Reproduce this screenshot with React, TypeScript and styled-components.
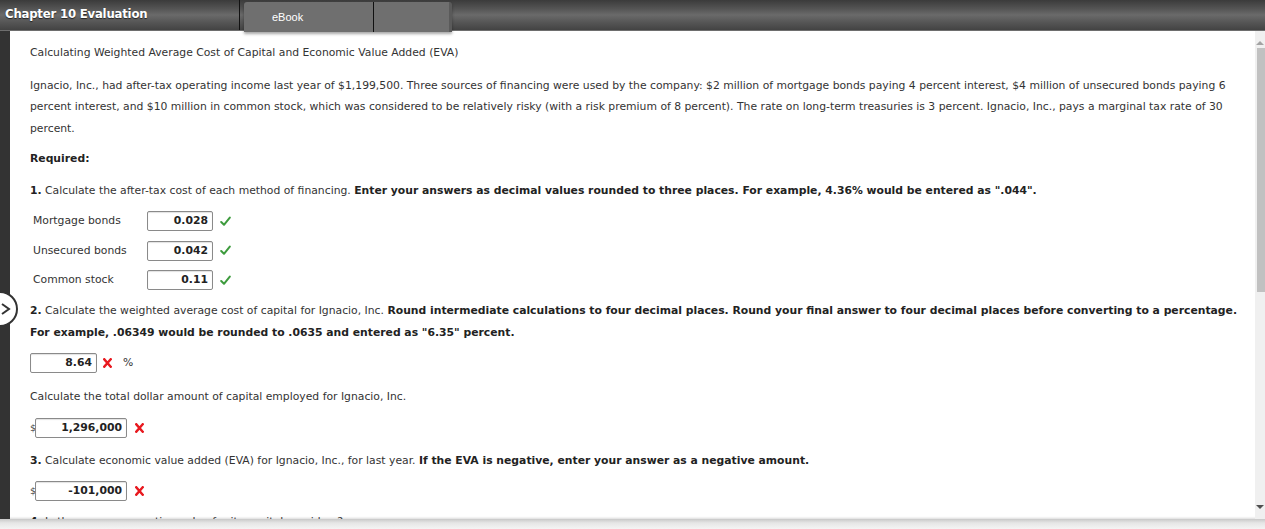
import React from 'react';
import styled, { createGlobalStyle } from 'styled-components';

const GlobalStyle = createGlobalStyle`
    html, body {
        margin: 0;
        padding: 0;
        overflow: hidden;
        background: #ffffff;
    }
    * {
        box-sizing: border-box;
    }
`;

interface CostRow {
    label: string;
    value: string;
}

const costRows: CostRow[] = [
    { label: 'Mortgage bonds', value: '0.028' },
    { label: 'Unsecured bonds', value: '0.042' },
    { label: 'Common stock', value: '0.11' },
];

const CheckIcon = () => (
    <svg width="11" height="11" viewBox="0 0 11 11">
        <path d="M1.2 6 L4 8.8 L9.8 1.6" fill="none" stroke="#3d9b3d" strokeWidth="2" strokeLinecap="round" strokeLinejoin="round" />
    </svg>
);

const CrossIcon = () => (
    <svg width="9" height="10" viewBox="0 0 9 10">
        <path d="M1.3 1.3 L7.7 8.7 M7.7 1.3 L1.3 8.7" fill="none" stroke="#e8191f" strokeWidth="2.4" strokeLinecap="square" />
    </svg>
);

const App: React.FC = () => {
    return (
        <Page>
            <GlobalStyle />
            <Header>
                <Title>Chapter 10 Evaluation</Title>
                <TabStrip>
                    <Tab>
                        <TabLabel>eBook</TabLabel>
                        <TabSlot />
                    </Tab>
                </TabStrip>
            </Header>
            <Main>
                <LeftRail />
                <ExpandButton>
                    <svg width="12" height="14" viewBox="0 0 12 14">
                        <path d="M2 2 L9 7 L2 12" fill="none" stroke="#333" strokeWidth="2" />
                    </svg>
                </ExpandButton>
                <Content>
                    <Intro>Calculating Weighted Average Cost of Capital and Economic Value Added (EVA)</Intro>
                    <Paragraph>
                        Ignacio, Inc., had after-tax operating income last year of $1,199,500. Three sources of financing were used by the company: $2 million of mortgage bonds paying 4 percent interest, $4 million of unsecured bonds paying 6 percent interest, and $10 million in common stock, which was considered to be relatively risky (with a risk premium of 8 percent). The rate on long-term treasuries is 3 percent. Ignacio, Inc., pays a marginal tax rate of 30 percent.
                    </Paragraph>
                    <Required>Required:</Required>
                    <Question>
                        <b>1.</b> Calculate the after-tax cost of each method of financing. <b>Enter your answers as decimal values rounded to three places. For example, 4.36% would be entered as ".044".</b>
                    </Question>
                    <RowList>
                        {costRows.map((row) => (
                            <AnswerRow key={row.label}>
                                <RowLabel>{row.label}</RowLabel>
                                <AnswerBox width={66}>{row.value}</AnswerBox>
                                <Mark size={18}><CheckIcon /></Mark>
                            </AnswerRow>
                        ))}
                    </RowList>
                    <Question>
                        <b>2.</b> Calculate the weighted average cost of capital for Ignacio, Inc. <b>Round intermediate calculations to four decimal places. Round your final answer to four decimal places before converting to a percentage.</b>
                        <br />
                        <b>For example, .06349 would be rounded to .0635 and entered as "6.35" percent.</b>
                    </Question>
                    <InlineAnswer>
                        <AnswerBox width={67}>8.64</AnswerBox>
                        <Mark size={15}><CrossIcon /></Mark>
                        <Unit>%</Unit>
                    </InlineAnswer>
                    <Question gap={13}>Calculate the total dollar amount of capital employed for Ignacio, Inc.</Question>
                    <InlineAnswer>
                        <Currency>$</Currency>
                        <AnswerBox width={92}>1,296,000</AnswerBox>
                        <Mark size={17}><CrossIcon /></Mark>
                    </InlineAnswer>
                    <Question gap={12}>
                        <b>3.</b> Calculate economic value added (EVA) for Ignacio, Inc., for last year. <b>If the EVA is negative, enter your answer as a negative amount.</b>
                    </Question>
                    <InlineAnswer>
                        <Currency>$</Currency>
                        <AnswerBox width={92}>-101,000</AnswerBox>
                        <Mark size={17}><CrossIcon /></Mark>
                    </InlineAnswer>
                    <Question gap={10}>
                        <b>4.</b> Is the company creating value for its capital providers?
                    </Question>
                </Content>
                <ScrollTrack>
                    <ScrollArrow up />
                    <ScrollThumb />
                    <ScrollSpacer />
                    <ScrollArrow />
                </ScrollTrack>
            </Main>
            <Footer />
        </Page>
    );
};

const Page = styled.div`
    width: 1265px;
    height: 529px;
    display: flex;
    flex-direction: column;
    font-family: 'DejaVu Sans', Verdana, sans-serif;
    color: #333;
    overflow: hidden;
`;

const Header = styled.div`
    height: 31px;
    flex-shrink: 0;
    display: flex;
    align-items: stretch;
    background: linear-gradient(to bottom, #3b3b3b 0%, #555 30%, #6a6a6a 50%, #555 75%, #434343 100%);
    border-bottom: 1px solid #6e6e6e;
`;

const Title = styled.div`
    width: 240px;
    padding: 6px 0 0 5px;
    font-family: 'DejaVu Sans Condensed', 'DejaVu Sans', sans-serif;
    font-weight: bold;
    font-size: 13px;
    letter-spacing: -0.2px;
    color: #ffffff;
    text-shadow: 0 1px 1px #222;
    border-right: 1px solid #111;
`;

const TabStrip = styled.div`
    display: flex;
    padding: 2px 0 0 4px;
`;

const Tab = styled.div`
    width: 208px;
    height: 30px;
    display: flex;
    background: #6f6f6f;
    border-radius: 3px 3px 0 0;
    box-shadow: 0 2px 3px rgba(0, 0, 0, 0.35);
    border-right: 3px solid #5a5a5a;
`;

const TabLabel = styled.div`
    width: 130px;
    padding: 9px 0 0 28px;
    font-family: 'Liberation Sans', Arial, sans-serif;
    font-size: 11px;
    color: #ffffff;
    border-right: 1px solid #111;
`;

const TabSlot = styled.div`
    flex: 1;
`;

const Main = styled.div`
    flex: 1;
    display: flex;
    position: relative;
    min-height: 0;
`;

const LeftRail = styled.div`
    width: 10px;
    flex-shrink: 0;
    background: #333;
`;

const ExpandButton = styled.div`
    position: absolute;
    left: -18px;
    top: 260px;
    width: 36px;
    height: 36px;
    border-radius: 50%;
    background: #ffffff;
    border: 2px solid #333;
    display: flex;
    align-items: center;
    justify-content: flex-end;
    padding-right: 4px;
`;

const Content = styled.div`
    flex: 1;
    padding: 11px 12px 0 20px;
    font-size: 10.8px;
    line-height: 21.5px;
    overflow: hidden;
    b {
        color: #222;
    }
`;

const Intro = styled.div``;

const Paragraph = styled.div`
    margin-top: 11px;
`;

const Required = styled.div`
    margin-top: 9px;
    font-weight: bold;
    color: #222;
`;

const Question = styled.div<{ gap?: number }>`
    margin-top: ${({ gap }) => (gap ?? 10)}px;
`;

const RowList = styled.div`
    margin-top: 10px;
    display: flex;
    flex-direction: column;
    gap: 9.5px;
`;

const AnswerRow = styled.div`
    display: flex;
    align-items: center;
    height: 20px;
`;

const RowLabel = styled.div`
    width: 117px;
    padding-left: 3px;
`;

const AnswerBox = styled.div<{ width: number }>`
    width: ${({ width }) => width}px;
    height: 20px;
    border: 1px solid #8a8a8a;
    border-radius: 2px;
    box-shadow: inset 0 1px 1px rgba(0, 0, 0, 0.12);
    text-align: right;
    padding-right: 4px;
    font-weight: bold;
    color: #222;
    line-height: 18px;
    background: #fff;
`;

const Mark = styled.div<{ size: number }>`
    width: ${({ size }) => size}px;
    display: flex;
    justify-content: flex-end;
    align-items: center;
    height: 20px;
`;

const InlineAnswer = styled.div`
    margin-top: 10px;
    display: flex;
    align-items: center;
    height: 20px;
`;

const Unit = styled.div`
    margin-left: 11px;
`;

const Currency = styled.div`
    width: 5px;
    font-size: 9.5px;
    color: #444;
`;

const ScrollTrack = styled.div`
    width: 10px;
    flex-shrink: 0;
    background: #f0f0f0;
    display: flex;
    flex-direction: column;
    align-items: flex-end;
`;

const ScrollArrow = styled.div<{ up?: boolean }>`
    height: 14px;
    width: 10px;
    display: flex;
    justify-content: center;
    align-items: ${({ up }) => (up ? 'flex-end' : 'flex-start')};
    &::before {
        content: '';
        width: 0;
        height: 0;
        border-left: 4px solid transparent;
        border-right: 4px solid transparent;
        ${({ up }) => (up ? 'border-bottom: 4px solid #a3a3a3;' : 'border-top: 4px solid #505050;')}
    }
`;

const ScrollThumb = styled.div`
    width: 8px;
    height: 244px;
    margin-top: 3px;
    background: #c1c1c1;
`;

const ScrollSpacer = styled.div`
    flex: 1;
`;

const Footer = styled.div`
    height: 10px;
    flex-shrink: 0;
    background: linear-gradient(to bottom, #c8c8c8 0%, #e6e6e6 40%, #f4f4f4 100%);
    box-shadow: 0 -1px 2px rgba(0, 0, 0, 0.15);
`;

export default App;
